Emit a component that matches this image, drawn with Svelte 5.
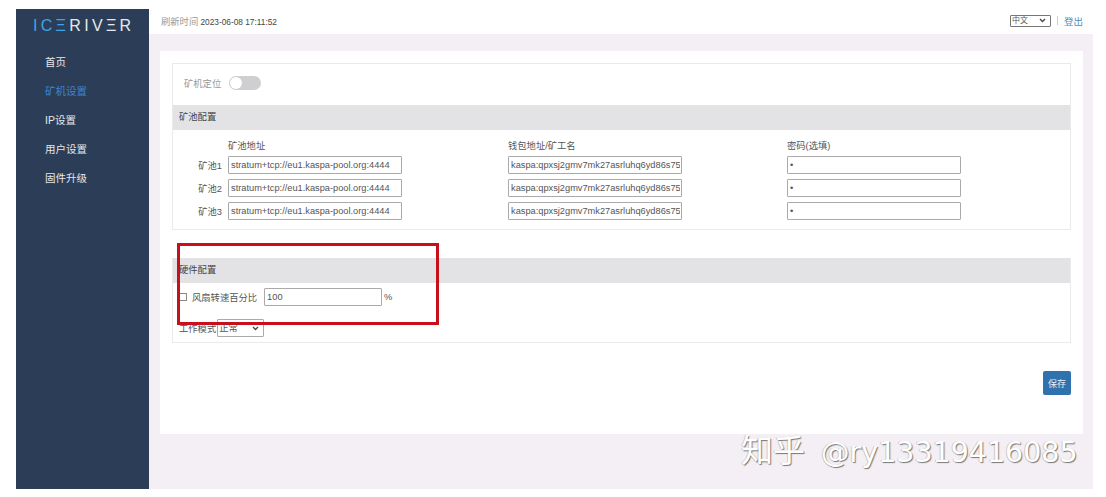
<script>
    const menu = ["首页", "矿机设置", "IP设置", "用户设置", "固件升级"];
    const active = "矿机设置";
    const pools = [1, 2, 3].map((n) => ({
        label: "矿池" + n,
        url: "stratum+tcp://eu1.kaspa-pool.org:4444",
        wallet: "kaspa:qpxsj2gmv7mk27asrluhq6yd86s75",
        pass: "•"
    }));
</script>

<div class="frame">
    <aside class="sidebar">
        <div class="logo"><span class="blue">ICΞ</span>RIVΞR</div>
        <nav>
            {#each menu as item}
                <div class="item" class:active={item === active}>{item}</div>
            {/each}
        </nav>
    </aside>

    <div class="right">
        <header class="topbar">
            <div class="refresh"><span class="muted">刷新时间</span> 2023-06-08 17:11:52</div>
            <div class="lang">
                <select class="lang-select"><option>中文</option></select>
                <span class="divider"></span>
                <span class="logout">登出</span>
            </div>
        </header>

        <main class="content">
            <div class="card">
                <section class="panel pool-panel">
                    <div class="locate">
                        <span class="muted-label">矿机定位</span>
                        <span class="toggle"><span class="knob"></span></span>
                    </div>
                    <div class="panel-title">矿池配置</div>
                    <div class="pool-grid">
                        <span></span>
                        <span class="head">矿池地址</span>
                        <span class="head">钱包地址/矿工名</span>
                        <span class="head">密码(选填)</span>
                        {#each pools as p}
                            <span class="pool-label">{p.label}</span>
                            <input value={p.url} />
                            <input value={p.wallet} />
                            <input value={p.pass} />
                        {/each}
                    </div>
                </section>

                <section class="panel hw-panel">
                    <div class="panel-title">硬件配置</div>
                    <div class="fan">
                        <span class="check"></span>
                        <span>风扇转速百分比</span>
                        <input class="speed" value="100" />
                        <span>%</span>
                    </div>
                    <div class="mode">
                        <span>工作模式</span>
                        <select class="mode-select"><option>正常</option></select>
                    </div>
                </section>

                <div class="actions">
                    <button class="save">保存</button>
                </div>
            </div>
        </main>
    </div>

    <div class="annotation"></div>
    <div class="watermark"><span class="wm-cjk">知乎</span> @ry13319416085</div>
</div>

<style>
    :global(body) {
        margin: 0;
        background: #fff;
    }

    .frame {
        position: relative;
        display: flex;
        width: 1077px;
        height: 480px;
        margin: 9px 0 0 16px;
        font-family: "Liberation Sans", "Noto Sans CJK SC", sans-serif;
        font-size: 9.3px;
        color: #555;
    }

    .sidebar {
        width: 133px;
        flex: none;
        background: #2c3e57;
    }

    .logo {
        height: 23px;
        padding: 8px 0 0 17px;
        font-size: 16px;
        line-height: 18px;
        letter-spacing: 3.3px;
        color: #e6e9ee;
        white-space: nowrap;
    }

    .blue {
        color: #3fa3e8;
    }

    nav {
        padding-top: 8px;
    }

    .item {
        height: 29px;
        padding-left: 29px;
        font-size: 10.5px;
        line-height: 29px;
        color: #e4e7ec;
    }

    .item.active {
        color: #3c84d0;
    }

    .right {
        flex: 1;
        display: flex;
        flex-direction: column;
        min-width: 0;
    }

    .topbar {
        flex: none;
        box-sizing: border-box;
        height: 25px;
        display: flex;
        align-items: center;
        justify-content: space-between;
        padding: 0 10px 2px 12px;
        background: #fff;
        font-size: 8.3px;
        color: #444;
    }

    .muted {
        font-size: 9.3px;
        color: #999;
    }

    .lang {
        display: flex;
        align-items: center;
        gap: 6px;
    }

    select {
        appearance: none;
        box-sizing: border-box;
        padding: 0 1px;
        border-radius: 1px;
        background: #fff url("data:image/svg+xml,%3Csvg xmlns='http://www.w3.org/2000/svg' width='7' height='5'%3E%3Cpath d='M1 1l2.5 2.5L6 1' fill='none' stroke='%23444' stroke-width='1.3'/%3E%3C/svg%3E") no-repeat right 4px center;
        font-family: "Liberation Sans", "Noto Sans CJK SC", sans-serif;
        color: #555;
    }

    .lang-select {
        width: 41px;
        height: 12px;
        border: 1px solid #777;
        font-size: 8px;
        line-height: 10px;
    }

    .divider {
        width: 1px;
        height: 9px;
        background: #ccc;
    }

    .logout {
        font-size: 9.5px;
        color: #4d90c2;
    }

    .content {
        flex: 1;
        padding: 17px 10px 55px 11px;
        background: #f3eff5;
    }

    .card {
        height: 100%;
        box-sizing: border-box;
        padding: 12px 12px 0;
        background: #fff;
    }

    .panel {
        box-sizing: border-box;
        border: 1px solid #eaeaea;
        border-top: 0;
    }

    .pool-panel {
        height: 167px;
        border-top: 1px solid #eaeaea;
    }

    .locate {
        box-sizing: border-box;
        height: 41px;
        display: flex;
        align-items: center;
        gap: 8px;
        padding: 0 0 4px 11px;
    }

    .muted-label {
        color: #999;
    }

    .toggle {
        display: flex;
        align-items: center;
        width: 32px;
        height: 14px;
        border-radius: 7px;
        background: #cfcfd2;
    }

    .knob {
        width: 12px;
        height: 12px;
        margin-left: 1px;
        border-radius: 50%;
        background: #fff;
    }

    .panel-title {
        height: 25px;
        padding-left: 6px;
        background: #e3e3e6;
        line-height: 25px;
        color: #444;
    }

    .pool-grid {
        display: grid;
        grid-template-columns: 55px 280px 279px 174px;
        grid-template-rows: 17px repeat(3, 23px);
        padding-top: 6px;
        align-items: center;
    }

    .pool-label {
        padding-right: 6px;
        text-align: right;
    }

    input {
        box-sizing: border-box;
        width: 174px;
        height: 18px;
        padding: 0 1px 0 2px;
        border: 1px solid #aaa;
        border-radius: 1px;
        font: 9.25px "Liberation Sans", sans-serif;
        color: #555;
        outline: none;
    }

    .hw-panel {
        height: 85px;
        margin-top: 28px;
    }

    .fan {
        display: flex;
        align-items: center;
        height: 27px;
    }

    .check {
        width: 6px;
        height: 6px;
        margin: 0 5px 0 6px;
        border: 1px solid #888;
    }

    input.speed {
        width: 118px;
        margin: 0 2px 0 7px;
    }

    .mode {
        display: flex;
        align-items: center;
        gap: 1px;
        padding: 9px 0 0 6px;
    }

    .mode-select {
        width: 47px;
        height: 18px;
        border: 1px solid #aaa;
        font-size: 9.3px;
    }

    .actions {
        display: flex;
        justify-content: flex-end;
        padding-top: 28px;
    }

    .save {
        width: 28px;
        height: 24px;
        padding: 0;
        border: 0;
        border-radius: 2px;
        background: #2f72ad;
        font: 9px "Noto Sans CJK SC", sans-serif;
        color: #e8eef5;
    }

    .annotation {
        position: absolute;
        left: 161px;
        top: 234px;
        width: 256px;
        height: 76px;
        border: 3px solid #c8101c;
    }

    .watermark {
        position: absolute;
        left: 725px;
        top: 421px;
        font-family: "DejaVu Sans", "Noto Sans CJK SC", sans-serif;
        font-size: 28.5px;
        line-height: 36px;
        white-space: nowrap;
        color: #fff;
        text-shadow: 1px 1px 1px #777, -1px 0 0 #ccc;
    }

    .wm-cjk {
        margin-right: 7px;
        font-family: "Noto Sans CJK SC", sans-serif;
        font-size: 32px;
    }
</style>
